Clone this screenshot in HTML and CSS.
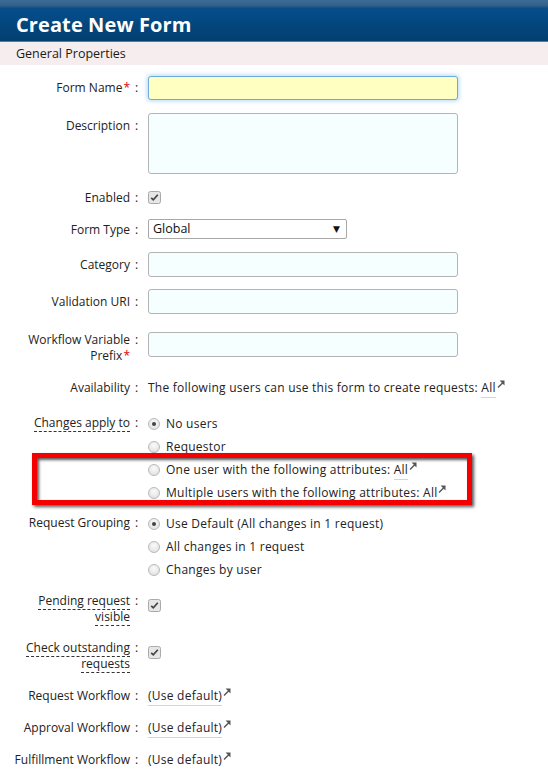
FILE: index.html
```html
<!DOCTYPE html>
<html>
<head>
<meta charset="utf-8">
<title>Create New Form</title>
<link rel="stylesheet" href="styles.css">
</head>
<body>
<div class="topstrip"></div>
<div class="titlebar"><h1>Create New Form</h1></div>
<div class="section">General Properties</div>
<div class="form">
  <div class="row r-name">
    <div class="label"><span class="ltext">Form Name<span class="req">*</span></span><span class="colon">:</span></div>
    <div class="value"><div class="input focused"></div></div>
  </div>
  <div class="row r-desc">
    <div class="label"><span class="ltext">Description</span><span class="colon">:</span></div>
    <div class="value"><div class="input textarea"></div></div>
  </div>
  <div class="row r-enabled">
    <div class="label"><span class="ltext">Enabled</span><span class="colon">:</span></div>
    <div class="value"><span class="check"><svg viewBox="0 0 13 13" width="13" height="13"><rect x="0.5" y="0.5" width="12" height="12" rx="2" fill="#e6e6e6" stroke="#aaaaaa"/><path d="M3.2 6.8 L5.3 8.8 L9.8 3.8" fill="none" stroke="#444" stroke-width="1.7"/></svg></span></div>
  </div>
  <div class="row r-type">
    <div class="label"><span class="ltext">Form Type</span><span class="colon">:</span></div>
    <div class="value"><div class="select"><span>Global</span><span class="arrow">▼</span></div></div>
  </div>
  <div class="row r-cat">
    <div class="label"><span class="ltext">Category</span><span class="colon">:</span></div>
    <div class="value"><div class="input"></div></div>
  </div>
  <div class="row r-uri">
    <div class="label"><span class="ltext">Validation URI</span><span class="colon">:</span></div>
    <div class="value"><div class="input"></div></div>
  </div>
  <div class="row r-prefix">
    <div class="label"><span class="ltext"><span>Workflow Variable</span><br><span>Prefix</span><span class="req">*</span></span><span class="colon">:</span></div>
    <div class="value"><div class="input"></div></div>
  </div>
  <div class="row r-avail">
    <div class="label"><span class="ltext">Availability</span><span class="colon">:</span></div>
    <div class="value text"><span>The following users can use this form to create requests: </span><span class="link">All</span><svg class="ext" viewBox="0 0 8 8" width="8" height="8"><path d="M1 7.5 L6 2.5" stroke="#555" stroke-width="1.4"/><path d="M2.6 0.5 H7.5 V5.4 Z" fill="#555"/></svg></div>
  </div>
  <div class="row r-apply">
    <div class="label"><span class="ltext"><span class="dash">Changes apply to</span></span><span class="colon">:</span></div>
    <div class="value text options">
      <div class="opt"><span class="radio on"></span><span>No users</span></div>
      <div class="opt"><span class="radio"></span><span>Requestor</span></div>
      <div class="opt"><span class="radio"></span><span>One user with the following attributes: <span class="link">All</span><svg class="ext" viewBox="0 0 8 8" width="8" height="8"><path d="M1 7.5 L6 2.5" stroke="#555" stroke-width="1.4"/><path d="M2.6 0.5 H7.5 V5.4 Z" fill="#555"/></svg></span></div>
      <div class="opt"><span class="radio"></span><span>Multiple users with the following attributes: <span class="link">All</span><svg class="ext" viewBox="0 0 8 8" width="8" height="8"><path d="M1 7.5 L6 2.5" stroke="#555" stroke-width="1.4"/><path d="M2.6 0.5 H7.5 V5.4 Z" fill="#555"/></svg></span></div>
    </div>
    <div class="highlight"></div>
  </div>
  <div class="row r-group">
    <div class="label"><span class="ltext">Request Grouping</span><span class="colon">:</span></div>
    <div class="value text options">
      <div class="opt"><span class="radio on"></span><span>Use Default (All changes in 1 request)</span></div>
      <div class="opt"><span class="radio"></span><span>All changes in 1 request</span></div>
      <div class="opt"><span class="radio"></span><span>Changes by user</span></div>
    </div>
  </div>
  <div class="row r-pending">
    <div class="label"><span class="ltext"><span class="dash">Pending request</span><br><span class="dash">visible</span></span><span class="colon">:</span></div>
    <div class="value"><span class="check"><svg viewBox="0 0 13 13" width="13" height="13"><rect x="0.5" y="0.5" width="12" height="12" rx="2" fill="#e6e6e6" stroke="#aaaaaa"/><path d="M3.2 6.8 L5.3 8.8 L9.8 3.8" fill="none" stroke="#444" stroke-width="1.7"/></svg></span></div>
  </div>
  <div class="row r-outstanding">
    <div class="label"><span class="ltext"><span class="dash">Check outstanding</span><br><span class="dash">requests</span></span><span class="colon">:</span></div>
    <div class="value"><span class="check"><svg viewBox="0 0 13 13" width="13" height="13"><rect x="0.5" y="0.5" width="12" height="12" rx="2" fill="#e6e6e6" stroke="#aaaaaa"/><path d="M3.2 6.8 L5.3 8.8 L9.8 3.8" fill="none" stroke="#444" stroke-width="1.7"/></svg></span></div>
  </div>
  <div class="row r-wf">
    <div class="label"><span class="ltext">Request Workflow</span><span class="colon">:</span></div>
    <div class="value text"><span class="link">(Use default)</span><svg class="ext" viewBox="0 0 8 8" width="8" height="8"><path d="M1 7.5 L6 2.5" stroke="#555" stroke-width="1.4"/><path d="M2.6 0.5 H7.5 V5.4 Z" fill="#555"/></svg></div>
  </div>
  <div class="row r-wf">
    <div class="label"><span class="ltext">Approval Workflow</span><span class="colon">:</span></div>
    <div class="value text"><span class="link">(Use default)</span><svg class="ext" viewBox="0 0 8 8" width="8" height="8"><path d="M1 7.5 L6 2.5" stroke="#555" stroke-width="1.4"/><path d="M2.6 0.5 H7.5 V5.4 Z" fill="#555"/></svg></div>
  </div>
  <div class="row r-wf">
    <div class="label"><span class="ltext">Fulfillment Workflow</span><span class="colon">:</span></div>
    <div class="value text"><span class="link">(Use default)</span><svg class="ext" viewBox="0 0 8 8" width="8" height="8"><path d="M1 7.5 L6 2.5" stroke="#555" stroke-width="1.4"/><path d="M2.6 0.5 H7.5 V5.4 Z" fill="#555"/></svg></div>
  </div>
</div>
</body>
</html>
```
FILE: styles.css
```css
* { box-sizing: border-box; }
html, body { margin: 0; padding: 0; background: #fff; }
body {
  font-family: "Open Sans", "DejaVu Sans", sans-serif;
  font-size: 12px;
  color: #222;
  width: 548px;
  overflow: hidden;
}
.topstrip {
  height: 8px;
  background: linear-gradient(#3d6d96, #30618b 70%, #29486a);
}
.titlebar {
  height: 34px;
  background: linear-gradient(#054f8e, #03457a 60%, #033f6f);
  border-bottom: 1px solid #2a8db0;
  padding-left: 16px;
}
.titlebar h1 {
  margin: 0;
  color: #fff;
  font-size: 20px;
  font-weight: bold;
  line-height: 33px;
  letter-spacing: 0.1px;
}
.section {
  height: 23px;
  background: #f6eeee;
  padding-left: 16px;
  line-height: 23px;
  font-size: 12.5px;
  color: #1a1a1a;
}
.form { padding-top: 11px; }
.row {
  position: relative;
  display: flex;
  align-items: flex-start;
}
.label {
  width: 140px;
  flex: none;
  display: flex;
  align-items: flex-start;
  justify-content: flex-end;
  line-height: 16px;
}
.ltext {
  max-width: 116px;
  text-align: right;
}
.colon {
  width: 10px;
  padding-left: 5px;
}
.req { color: #e00000; margin-left: 1px; }
.dash { border-bottom: 1px dashed #333; }
.value {
  margin-left: 8px;
  line-height: 16px;
}
.value.text { letter-spacing: 0.25px; }
.input {
  width: 310px;
  height: 25px;
  border: 1px solid #b4b4b4;
  border-radius: 3px;
  background: #f5ffff;
}
.input.focused {
  height: 24px;
  background: #ffffc2;
  border-color: #6fabdc;
  box-shadow: 0 0 4px 1px #b4d8f6;
}
.input.textarea { height: 61px; }
.select {
  width: 199px;
  height: 20px;
  border: 1px solid #a8a8a8;
  border-radius: 2px;
  background: #fff;
  display: flex;
  justify-content: space-between;
  align-items: center;
  padding: 0 6px 0 4px;
  font-size: 12.5px;
  color: #111;
}
.arrow { font-size: 9px; color: #111; }
.check { display: inline-block; height: 13px; vertical-align: top; }
.check svg { display: block; }
.link { border-bottom: 1px solid #d4d4d4; padding-bottom: 1px; }
.ext { margin-left: 1px; vertical-align: 4px; }
.options { line-height: 23px; }
.opt { display: flex; align-items: center; height: 23px; }
.radio {
  width: 12px;
  height: 12px;
  border-radius: 50%;
  border: 1px solid #b9b9b9;
  background: radial-gradient(circle at 50% 35%, #fafafa, #dcdcdc);
  margin-right: 6px;
  flex: none;
  position: relative;
}
.radio.on::after {
  content: "";
  position: absolute;
  left: 3px; top: 3px;
  width: 4px; height: 4px;
  border-radius: 50%;
  background: #444;
}
.highlight {
  position: absolute;
  left: 32px;
  top: 41px;
  width: 440px;
  height: 52px;
  border: 5px solid #f40000;
  box-shadow: 2px 2px 3px rgba(0,0,0,0.65), inset 2px 2px 3px rgba(0,0,0,0.65);
  pointer-events: none;
}
.r-name .label { padding-top: 4px; }
.r-desc { margin-top: 13px; }
.r-desc .label { padding-top: 5px; }
.r-enabled { margin-top: 16px; }
.r-enabled .check { margin-top: 1px; }
.r-type { margin-top: 13px; }
.r-type .label { padding-top: 3px; }
.r-cat { margin-top: 13px; }
.r-cat .label, .r-uri .label { padding-top: 5px; }
.r-uri { margin-top: 12px; }
.r-prefix { margin-top: 18px; }
.r-avail { margin-top: 16px; }
.r-apply { margin-top: 16px; }
.r-apply .label, .r-group .label { padding-top: 3px; }
.r-group { margin-top: 8px; }
.r-pending { margin-top: 12px; }
.r-pending .check, .r-outstanding .check { margin-top: 6px; }
.r-outstanding { margin-top: 15px; }
.r-wf { margin-top: 16px; }
```
